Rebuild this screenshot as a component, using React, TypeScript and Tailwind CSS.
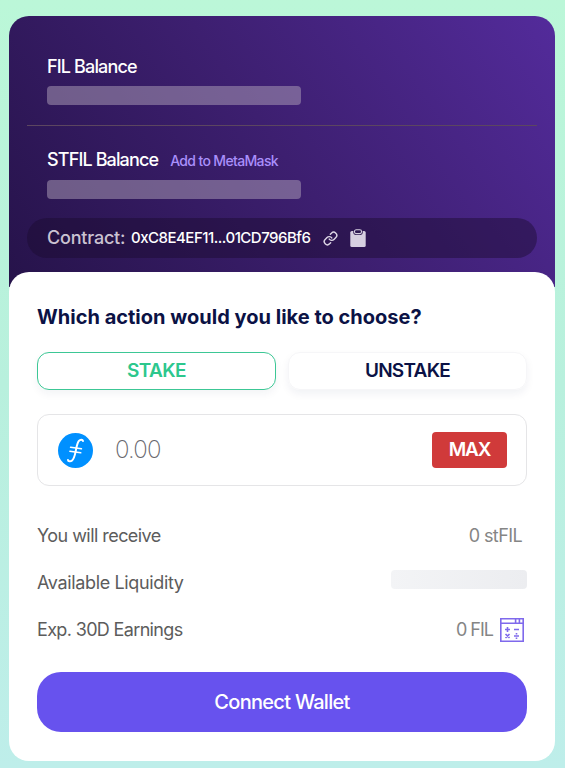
import { Link } from "lucide-react";

interface StatRow {
  label: string;
  value?: string;
  labelClass: string;
  valueClass?: string;
  hasCalculator?: boolean;
}

const rows: StatRow[] = [
  {
    label: "You will receive",
    value: "0 stFIL",
    labelClass: "tracking-[-0.55px]",
    valueClass: "pr-0.5 tracking-[-0.6px]",
  },
  {
    label: "Available Liquidity",
    labelClass: "tracking-[-0.36px]",
  },
  {
    label: "Exp. 30D Earnings",
    value: "0 FIL",
    labelClass: "tracking-[-0.65px]",
    valueClass: "tracking-[-1px]",
    hasCalculator: true,
  },
];

function FilecoinIcon() {
  return (
    <svg className="h-[35px] w-[35px] shrink-0" viewBox="0 0 35 35" fill="none">
      <circle cx="17.5" cy="17.5" r="17.5" fill="#0090FF" />
      <path
        d="M25 8c-.4-1.6-2.7-1.8-4.1-.1-1.8 2.2-2.3 6.2-3.1 9.8-.8 3.8-1.5 8-3.7 9.8-1.6 1.4-3.9.9-4.1-.4"
        stroke="white"
        strokeWidth="2"
        strokeLinecap="round"
      />
      <path
        d="M12.6 14.3l10.8 1.5M11.9 18.3l10.8 1.5"
        stroke="white"
        strokeWidth="1.6"
        strokeLinecap="round"
      />
    </svg>
  );
}

function ClipboardIcon() {
  return (
    <svg className="ml-3 h-[18px] w-4 shrink-0" viewBox="0 0 16 18" fill="none">
      <rect x=".3" y="2" width="15.4" height="16" rx="1.6" fill="#D6CFE0" />
      <rect x="3.2" y="0" width="9.6" height="6" rx="3" fill="#2C1750" />
      <rect
        x="4.4"
        y=".8"
        width="7.2"
        height="3.8"
        rx="1.9"
        stroke="#D6CFE0"
        strokeWidth="1.1"
      />
    </svg>
  );
}

function CalculatorIcon() {
  return (
    <svg
      className="h-6 w-6 shrink-0"
      viewBox="0 0 24 24"
      fill="none"
      stroke="#7F69EC"
      strokeWidth="1.6"
    >
      <path d="M.8.8h22.4v22.4H.8zM.8 5.3h22.4M15.6.8v4.5M19.4.8v4.5" />
      <path d="M5 11.5h5M7.5 9v5M14 11.5h5M5.5 16l4 4M9.5 16l-4 4M14 18h5" />
      <path d="M16.5 15v1.5M16.5 19.5V21" />
    </svg>
  );
}

export default function App() {
  return (
    <div className="h-[768px] w-full bg-linear-to-b from-[#bbf7d8] via-[#b8f0dd] to-[#beeeea] pt-4 pr-2.5 pl-[9px] font-['Inter','Liberation_Sans',sans-serif]">
      <div className="h-[271px] rounded-t-[20px] bg-linear-55 from-[#26134a] via-[#3d1f70] to-[#532b9b] px-[18px] pt-[39px]">
        <div className="px-5">
          <p className="text-lg leading-6 font-medium tracking-[-0.85px] text-white">
            FIL Balance
          </p>
          <div className="mt-[7px] h-[19px] w-[254px] rounded bg-[#b0a2ba]/50" />
        </div>
        <div className="mt-5 h-px w-full bg-[#5c4660]" />
        <div className="px-5 pt-[22px]">
          <div className="flex h-6 items-center gap-3">
            <p className="text-lg leading-6 font-medium tracking-[-0.87px] whitespace-nowrap text-white">
              STFIL Balance
            </p>
            <a className="pt-0.5 text-sm leading-5 font-medium tracking-[-0.65px] whitespace-nowrap text-[#a98ffb]">
              Add to MetaMask
            </a>
          </div>
          <div className="mt-2 h-[19px] w-[254px] rounded bg-[#b0a2ba]/50" />
        </div>
        <div className="mt-[19px] flex h-10 items-center rounded-full bg-[#1a0c2e]/45 pl-5">
          <span className="w-[79px] text-lg font-medium tracking-[-0.2px] whitespace-nowrap text-[#cbc3d2]">
            Contract:
          </span>
          <span className="ml-[5px] w-[182px] text-[15px] font-medium tracking-[-0.5px] whitespace-nowrap text-white">
            0xC8E4EF11...01CD796Bf6
          </span>
          <Link
            className="ml-2.5 h-[15px] w-[15px] shrink-0 text-[#ded7e6]"
            strokeWidth={2.3}
          />
          <ClipboardIcon />
        </div>
      </div>

      <div className="relative -mt-[15px] h-[489px] rounded-[20px] bg-white px-[28px] pt-[33px]">
        <h1 className="h-6 text-xl leading-6 font-bold tracking-[0.01px] whitespace-nowrap text-[#0b1245]">
          Which action would you like to choose?
        </h1>

        <div className="mt-[23px] flex gap-3">
          <button className="h-[38px] flex-1 rounded-xl border border-[#3cc795] text-[19px] font-semibold tracking-[-0.6px] text-[#2cc78d] shadow-[0_4px_8px_rgba(20,30,80,0.05)]">
            STAKE
          </button>
          <button className="h-[38px] flex-1 rounded-xl border border-[#f6f6f8] text-[19px] font-semibold tracking-[-0.75px] text-[#0b1245] shadow-[0_4px_8px_rgba(20,30,80,0.06)]">
            UNSTAKE
          </button>
        </div>

        <div className="mt-6 flex h-[72px] items-center rounded-xl border border-[#e5e5e7] pr-[19px] pl-5">
          <FilecoinIcon />
          <span className="ml-[22px] text-2xl font-extralight tracking-[-0.8px] text-[#66666c]">
            0.00
          </span>
          <button className="ml-auto h-9 w-[75px] rounded bg-[#d03a3a] text-[19px] font-semibold tracking-[-1.2px] text-white">
            MAX
          </button>
        </div>

        <div className="mt-[26px]">
          {rows.map((row) => (
            <div
              key={row.label}
              className="flex h-[47px] items-center justify-between text-lg"
            >
              <span className={`text-[#5c5c5c] ${row.labelClass}`}>
                {row.label}
              </span>
              {row.value ? (
                <div className="flex items-center gap-[7px] pr-[3px]">
                  <span className={`text-[#858585] ${row.valueClass}`}>
                    {row.value}
                  </span>
                  {row.hasCalculator && <CalculatorIcon />}
                </div>
              ) : (
                <div className="mb-1.5 h-[19px] w-[136px] rounded bg-linear-to-r from-[#f3f4f6] to-[#ecedf0]" />
              )}
            </div>
          ))}
        </div>

        <button className="mt-[19px] h-[60px] w-full rounded-3xl bg-[#6752ee] text-xl font-medium tracking-[-0.7px] text-white">
          Connect Wallet
        </button>
      </div>
    </div>
  );
}
